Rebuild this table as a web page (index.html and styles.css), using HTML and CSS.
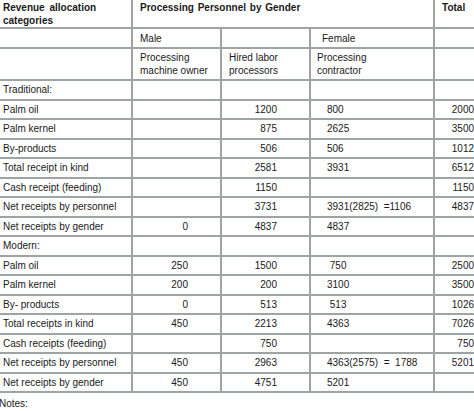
FILE: index.html
```html
<!DOCTYPE html>
<html lang="en">
<head>
<meta charset="utf-8">
<title>Revenue allocation</title>
<link rel="stylesheet" href="styles.css">
</head>
<body>
<table class="rev">
  <colgroup>
    <col class="c0"><col class="c1"><col class="c2"><col class="c3"><col class="c4">
  </colgroup>
  <tr class="r-head">
    <th class="lab">Revenue allocation categories</th>
    <th class="grp" colspan="3">Processing Personnel by Gender</th>
    <th class="tot">Total</th>
  </tr>
  <tr class="r-gender">
    <td></td>
    <td class="sub">Male</td>
    <td></td>
    <td class="sub fem">Female</td>
    <td></td>
  </tr>
  <tr class="r-role">
    <td></td>
    <td class="sub">Processing machine owner</td>
    <td class="sub">Hired labor processors</td>
    <td class="sub sub3">Processing contractor</td>
    <td></td>
  </tr>
  <tr><td class="lab">Traditional:</td><td></td><td></td><td></td><td></td></tr>
  <tr><td class="lab">Palm oil</td><td class="n"></td><td class="n">1200</td><td class="l">800</td><td class="t">2000</td></tr>
  <tr><td class="lab">Palm kernel</td><td class="n"></td><td class="n">875</td><td class="l">2625</td><td class="t">3500</td></tr>
  <tr><td class="lab">By-products</td><td class="n"></td><td class="n">506</td><td class="l">506</td><td class="t">1012</td></tr>
  <tr><td class="lab">Total receipt in kind</td><td class="n"></td><td class="n">2581</td><td class="l">3931</td><td class="t">6512</td></tr>
  <tr><td class="lab">Cash receipt (feeding)</td><td class="n"></td><td class="n">1150</td><td class="l"></td><td class="t">1150</td></tr>
  <tr><td class="lab">Net receipts by personnel</td><td class="n"></td><td class="n">3731</td><td class="l">3931(2825) &nbsp;=1106</td><td class="t">4837</td></tr>
  <tr><td class="lab">Net receipts by gender</td><td class="n">0</td><td class="n">4837</td><td class="l">4837</td><td class="t"></td></tr>
  <tr><td class="lab">Modern:</td><td></td><td></td><td></td><td></td></tr>
  <tr><td class="lab">Palm oil</td><td class="n">250</td><td class="n">1500</td><td class="l">&nbsp;750</td><td class="t">2500</td></tr>
  <tr><td class="lab">Palm kernel</td><td class="n">200</td><td class="n">200</td><td class="l">3100</td><td class="t">3500</td></tr>
  <tr><td class="lab">By- products</td><td class="n">0</td><td class="n">513</td><td class="l">&nbsp;513</td><td class="t">1026</td></tr>
  <tr><td class="lab">Total receipts in kind</td><td class="n">450</td><td class="n">2213</td><td class="l">4363</td><td class="t">7026</td></tr>
  <tr><td class="lab">Cash receipts (feeding)</td><td class="n"></td><td class="n">750</td><td class="l"></td><td class="t">750</td></tr>
  <tr><td class="lab">Net receipts by personnel</td><td class="n">450</td><td class="n">2963</td><td class="l">4363(2575) &nbsp;= &nbsp;1788</td><td class="t">5201</td></tr>
  <tr><td class="lab">Net receipts by gender</td><td class="n">450</td><td class="n">4751</td><td class="l">5201</td><td class="t"></td></tr>
</table>
<p class="notes">Notes:</p>
</body>
</html>
```
FILE: styles.css
```css
html, body {
  margin: 0;
  padding: 0;
  background: #ffffff;
  overflow: hidden;
}
body {
  width: 474px;
  height: 411px;
  font-family: "Liberation Sans", Arial, sans-serif;
  font-size: 10px;
  color: #1a1a1a;
}
.rev {
  border-collapse: separate;
  border-spacing: 0;
  table-layout: fixed;
  width: 484px;
}
.c0 { width: 133px; }
.c1 { width: 89px; }
.c2 { width: 89px; }
.c3 { width: 124px; }
.c4 { width: 49px; }
.rev th, .rev td {
  box-sizing: border-box;
  border-bottom: 2px solid #9ea3a3;
  border-right: 2px solid #9ea3a3;
  padding: 0;
  height: 19.5px;
  line-height: 13px;
  vertical-align: middle;
  text-align: left;
  white-space: nowrap;
  overflow: hidden;
}
.rev th:last-child, .rev td:last-child { border-right: none; }
.rev th {
  font-weight: bold;
  vertical-align: top;
  padding-top: 1px;
}
.rev .r-head th { height: 29px; }
.rev .r-gender td { height: 20px; }
.rev .r-role td { height: 32px; }
.rev .lab { padding-left: 3px; }
.rev th.lab { white-space: normal; word-spacing: 2px; }
.rev .grp { padding-left: 7px; word-spacing: 1px; }
.rev .tot { padding-left: 7px; }
.rev .sub { padding-left: 7px; white-space: normal; }
.rev .fem { padding-left: 11px; }
.rev .sub3 { padding-left: 6px; padding-right: 40px; }
.rev .n { text-align: right; padding-right: 32px; }
.rev .l { padding-left: 16px; }
.rev .t { text-align: right; padding-right: 10px; }
.notes {
  margin: 4px 0 0 -1px;
  line-height: 14px;
}
```
